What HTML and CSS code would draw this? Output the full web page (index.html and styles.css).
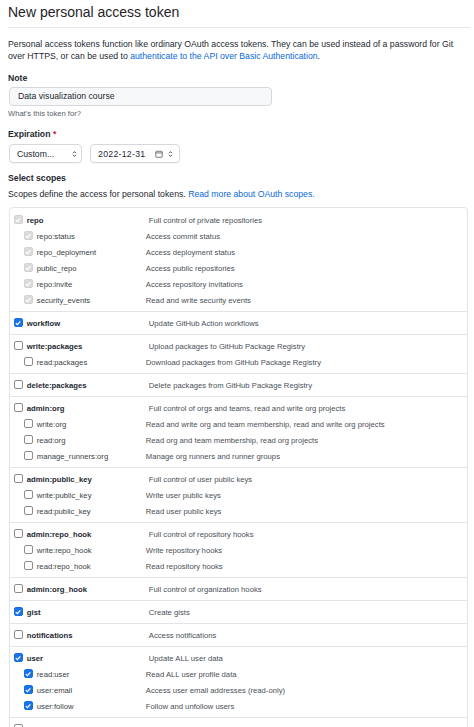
FILE: index.html
```html
<!DOCTYPE html>
<html lang="en">
<head>
<meta charset="utf-8">
<title>New personal access token</title>
<link rel="stylesheet" href="styles.css">
</head>
<body>
<div class="page">
  <h1 class="title">New personal access token</h1>
  <p class="intro">Personal access tokens function like ordinary OAuth access tokens. They can be used instead of a password for Git over HTTPS, or can be used to <a href="#">authenticate to the API over Basic Authentication</a>.</p>

  <div class="field-label">Note</div>
  <div class="input">Data visualization course</div>
  <div class="hint">What’s this token for?</div>

  <div class="field-label exp">Expiration <span class="req">*</span></div>
  <div class="selects">
    <div class="select sel-custom"><span>Custom...</span>
      <svg class="updown" width="5" height="8" viewBox="0 0 5 8"><path d="M1 3.2 L2.5 1.6 L4 3.2 M1 4.8 L2.5 6.4 L4 4.8" fill="none" stroke="#444" stroke-width="0.9"/></svg>
    </div>
    <div class="select sel-date"><span>2022-12-31</span>
      <svg class="cal" width="8" height="8" viewBox="0 0 8 8"><rect x="0.75" y="1.25" width="6.5" height="6" rx="0.8" fill="none" stroke="#555" stroke-width="0.8"/><path d="M0.75 2.9 H7.25" stroke="#555" stroke-width="0.8"/></svg>
      <svg class="updown" width="5" height="8" viewBox="0 0 5 8"><path d="M1 3.2 L2.5 1.6 L4 3.2 M1 4.8 L2.5 6.4 L4 4.8" fill="none" stroke="#444" stroke-width="0.9"/></svg>
    </div>
  </div>

  <div class="field-label scopes-label">Select scopes</div>
  <p class="scopes-intro">Scopes define the access for personal tokens. <a href="#">Read more about OAuth scopes.</a></p>

  <div class="scopes">
    <div class="group">
      <div class="row top"><span class="cb dis"><svg viewBox="0 0 8 8"><path d="M1.8 4.1 L3.4 5.7 L6.3 2.3" fill="none" stroke="#fff" stroke-width="1.2"/></svg></span><span class="name">repo</span><span class="desc">Full control of private repositories</span></div>
      <div class="row sub"><span class="cb dis"><svg viewBox="0 0 8 8"><path d="M1.8 4.1 L3.4 5.7 L6.3 2.3" fill="none" stroke="#fff" stroke-width="1.2"/></svg></span><span class="name">repo:status</span><span class="desc">Access commit status</span></div>
      <div class="row sub"><span class="cb dis"><svg viewBox="0 0 8 8"><path d="M1.8 4.1 L3.4 5.7 L6.3 2.3" fill="none" stroke="#fff" stroke-width="1.2"/></svg></span><span class="name">repo_deployment</span><span class="desc">Access deployment status</span></div>
      <div class="row sub"><span class="cb dis"><svg viewBox="0 0 8 8"><path d="M1.8 4.1 L3.4 5.7 L6.3 2.3" fill="none" stroke="#fff" stroke-width="1.2"/></svg></span><span class="name">public_repo</span><span class="desc">Access public repositories</span></div>
      <div class="row sub"><span class="cb dis"><svg viewBox="0 0 8 8"><path d="M1.8 4.1 L3.4 5.7 L6.3 2.3" fill="none" stroke="#fff" stroke-width="1.2"/></svg></span><span class="name">repo:invite</span><span class="desc">Access repository invitations</span></div>
      <div class="row sub"><span class="cb dis"><svg viewBox="0 0 8 8"><path d="M1.8 4.1 L3.4 5.7 L6.3 2.3" fill="none" stroke="#fff" stroke-width="1.2"/></svg></span><span class="name">security_events</span><span class="desc">Read and write security events</span></div>
    </div>
    <div class="group">
      <div class="row top"><span class="cb on"><svg viewBox="0 0 8 8"><path d="M1.8 4.1 L3.4 5.7 L6.3 2.3" fill="none" stroke="#fff" stroke-width="1.2"/></svg></span><span class="name">workflow</span><span class="desc">Update GitHub Action workflows</span></div>
    </div>
    <div class="group">
      <div class="row top"><span class="cb"></span><span class="name">write:packages</span><span class="desc">Upload packages to GitHub Package Registry</span></div>
      <div class="row sub"><span class="cb"></span><span class="name">read:packages</span><span class="desc">Download packages from GitHub Package Registry</span></div>
    </div>
    <div class="group">
      <div class="row top"><span class="cb"></span><span class="name">delete:packages</span><span class="desc">Delete packages from GitHub Package Registry</span></div>
    </div>
    <div class="group">
      <div class="row top"><span class="cb"></span><span class="name">admin:org</span><span class="desc">Full control of orgs and teams, read and write org projects</span></div>
      <div class="row sub"><span class="cb"></span><span class="name">write:org</span><span class="desc">Read and write org and team membership, read and write org projects</span></div>
      <div class="row sub"><span class="cb"></span><span class="name">read:org</span><span class="desc">Read org and team membership, read org projects</span></div>
      <div class="row sub"><span class="cb"></span><span class="name">manage_runners:org</span><span class="desc">Manage org runners and runner groups</span></div>
    </div>
    <div class="group">
      <div class="row top"><span class="cb"></span><span class="name">admin:public_key</span><span class="desc">Full control of user public keys</span></div>
      <div class="row sub"><span class="cb"></span><span class="name">write:public_key</span><span class="desc">Write user public keys</span></div>
      <div class="row sub"><span class="cb"></span><span class="name">read:public_key</span><span class="desc">Read user public keys</span></div>
    </div>
    <div class="group">
      <div class="row top"><span class="cb"></span><span class="name">admin:repo_hook</span><span class="desc">Full control of repository hooks</span></div>
      <div class="row sub"><span class="cb"></span><span class="name">write:repo_hook</span><span class="desc">Write repository hooks</span></div>
      <div class="row sub"><span class="cb"></span><span class="name">read:repo_hook</span><span class="desc">Read repository hooks</span></div>
    </div>
    <div class="group">
      <div class="row top"><span class="cb"></span><span class="name">admin:org_hook</span><span class="desc">Full control of organization hooks</span></div>
    </div>
    <div class="group">
      <div class="row top"><span class="cb on"><svg viewBox="0 0 8 8"><path d="M1.8 4.1 L3.4 5.7 L6.3 2.3" fill="none" stroke="#fff" stroke-width="1.2"/></svg></span><span class="name">gist</span><span class="desc">Create gists</span></div>
    </div>
    <div class="group">
      <div class="row top"><span class="cb"></span><span class="name">notifications</span><span class="desc">Access notifications</span></div>
    </div>
    <div class="group">
      <div class="row top"><span class="cb on"><svg viewBox="0 0 8 8"><path d="M1.8 4.1 L3.4 5.7 L6.3 2.3" fill="none" stroke="#fff" stroke-width="1.2"/></svg></span><span class="name">user</span><span class="desc">Update ALL user data</span></div>
      <div class="row sub"><span class="cb on"><svg viewBox="0 0 8 8"><path d="M1.8 4.1 L3.4 5.7 L6.3 2.3" fill="none" stroke="#fff" stroke-width="1.2"/></svg></span><span class="name">read:user</span><span class="desc">Read ALL user profile data</span></div>
      <div class="row sub"><span class="cb on"><svg viewBox="0 0 8 8"><path d="M1.8 4.1 L3.4 5.7 L6.3 2.3" fill="none" stroke="#fff" stroke-width="1.2"/></svg></span><span class="name">user:email</span><span class="desc">Access user email addresses (read-only)</span></div>
      <div class="row sub"><span class="cb on"><svg viewBox="0 0 8 8"><path d="M1.8 4.1 L3.4 5.7 L6.3 2.3" fill="none" stroke="#fff" stroke-width="1.2"/></svg></span><span class="name">user:follow</span><span class="desc">Follow and unfollow users</span></div>
    </div>
    <div class="group">
      <div class="row top"><span class="cb"></span><span class="name">delete_repo</span><span class="desc">Delete repositories</span></div>
    </div>
  </div>
</div>
</body>
</html>
```

FILE: styles.css
```css
html, body {
  margin: 0;
  padding: 0;
  background: #ffffff;
}

body {
  font-family: "Liberation Sans", Arial, sans-serif;
  color: #24292f;
  overflow: hidden;
}

.page {
  padding: 0 4px 0 8px;
}

.title {
  margin: 0;
  padding: 3px 0 6px;
  font-size: 14px;
  line-height: 18px;
  font-weight: 400;
  color: #1f2328;
  border-bottom: 1px solid #e4e6e9;
}

.intro {
  margin: 10px 0 0;
  font-size: 8.7px;
  line-height: 12px;
  color: #24292f;
}

a {
  color: #0969da;
  text-decoration: none;
}

.field-label {
  margin-top: 10px;
  font-size: 8.7px;
  line-height: 12px;
  font-weight: 700;
}

.field-label.exp {
  margin-top: 9px;
}

.req {
  color: #cf222e;
}

.input {
  margin-top: 3px;
  margin-left: 1px;
  width: 253px;
  height: 17px;
  padding-left: 8px;
  border: 1px solid #d5d9de;
  border-radius: 4px;
  background: #f6f8fa;
  font-size: 8.7px;
  line-height: 17px;
  color: #24292f;
}

.hint {
  margin-top: 3px;
  font-size: 7.6px;
  line-height: 10px;
  color: #57606a;
}

.selects {
  display: flex;
  gap: 8px;
  margin-top: 4px;
  margin-left: 1px;
}

.select {
  display: flex;
  align-items: center;
  height: 17px;
  border: 1px solid #d5d9de;
  border-radius: 4px;
  background: #ffffff;
  box-shadow: 0 1px 0 rgba(31, 35, 40, 0.04);
  font-size: 8.7px;
  color: #24292f;
}

.sel-custom {
  padding-left: 7px;
  width: 64px;
}

.sel-custom span {
  flex: 1;
}

.sel-custom .updown {
  margin-right: 4px;
}

.sel-date {
  padding-left: 7px;
  width: 81px;
}

.sel-date span {
  letter-spacing: 0.3px;
}

.sel-date .cal {
  margin-left: 10px;
}

.sel-date .updown {
  margin-left: 5px;
}

.scopes-label {
  margin-top: 9px;
}

.scopes-intro {
  margin: 4px 0 0;
  font-size: 8.7px;
  line-height: 12px;
}

.scopes {
  margin-top: 7px;
  margin-left: 1px;
  width: 457px;
  border: 1px solid #e1e4e8;
  border-radius: 4px;
}

.group {
  padding: 3px 0;
  border-top: 1px solid #e1e4e8;
}

.group:first-child {
  border-top: none;
  padding-top: 4px;
}

.row {
  display: flex;
  align-items: center;
  height: 16px;
  font-size: 7.7px;
}

.row.top {
  padding-left: 4px;
}

.row.sub {
  padding-left: 14px;
}

.cb {
  flex: none;
  width: 6.8px;
  height: 6.8px;
  border: 0.8px solid #8c8c8c;
  border-radius: 2px;
  background: #fff;
  margin-right: 4px;
  display: flex;
  align-items: center;
  justify-content: center;
  position: relative;
  top: -0.5px;
}

.cb svg {
  width: 8px;
  height: 8px;
  flex: none;
}

.cb.on {
  background: #1a73e8;
  border-color: #1a6fe0;
}

.cb.dis {
  background: #dcdcdc;
  border-color: #d2d2d2;
}

.name {
  flex: none;
  color: #3a3f45;
}

.row.top .name {
  width: 122px;
  font-weight: 700;
  color: #24292f;
}

.row.sub .name {
  width: 109px;
}

.desc {
  color: #4a5058;
  white-space: nowrap;
}
```
